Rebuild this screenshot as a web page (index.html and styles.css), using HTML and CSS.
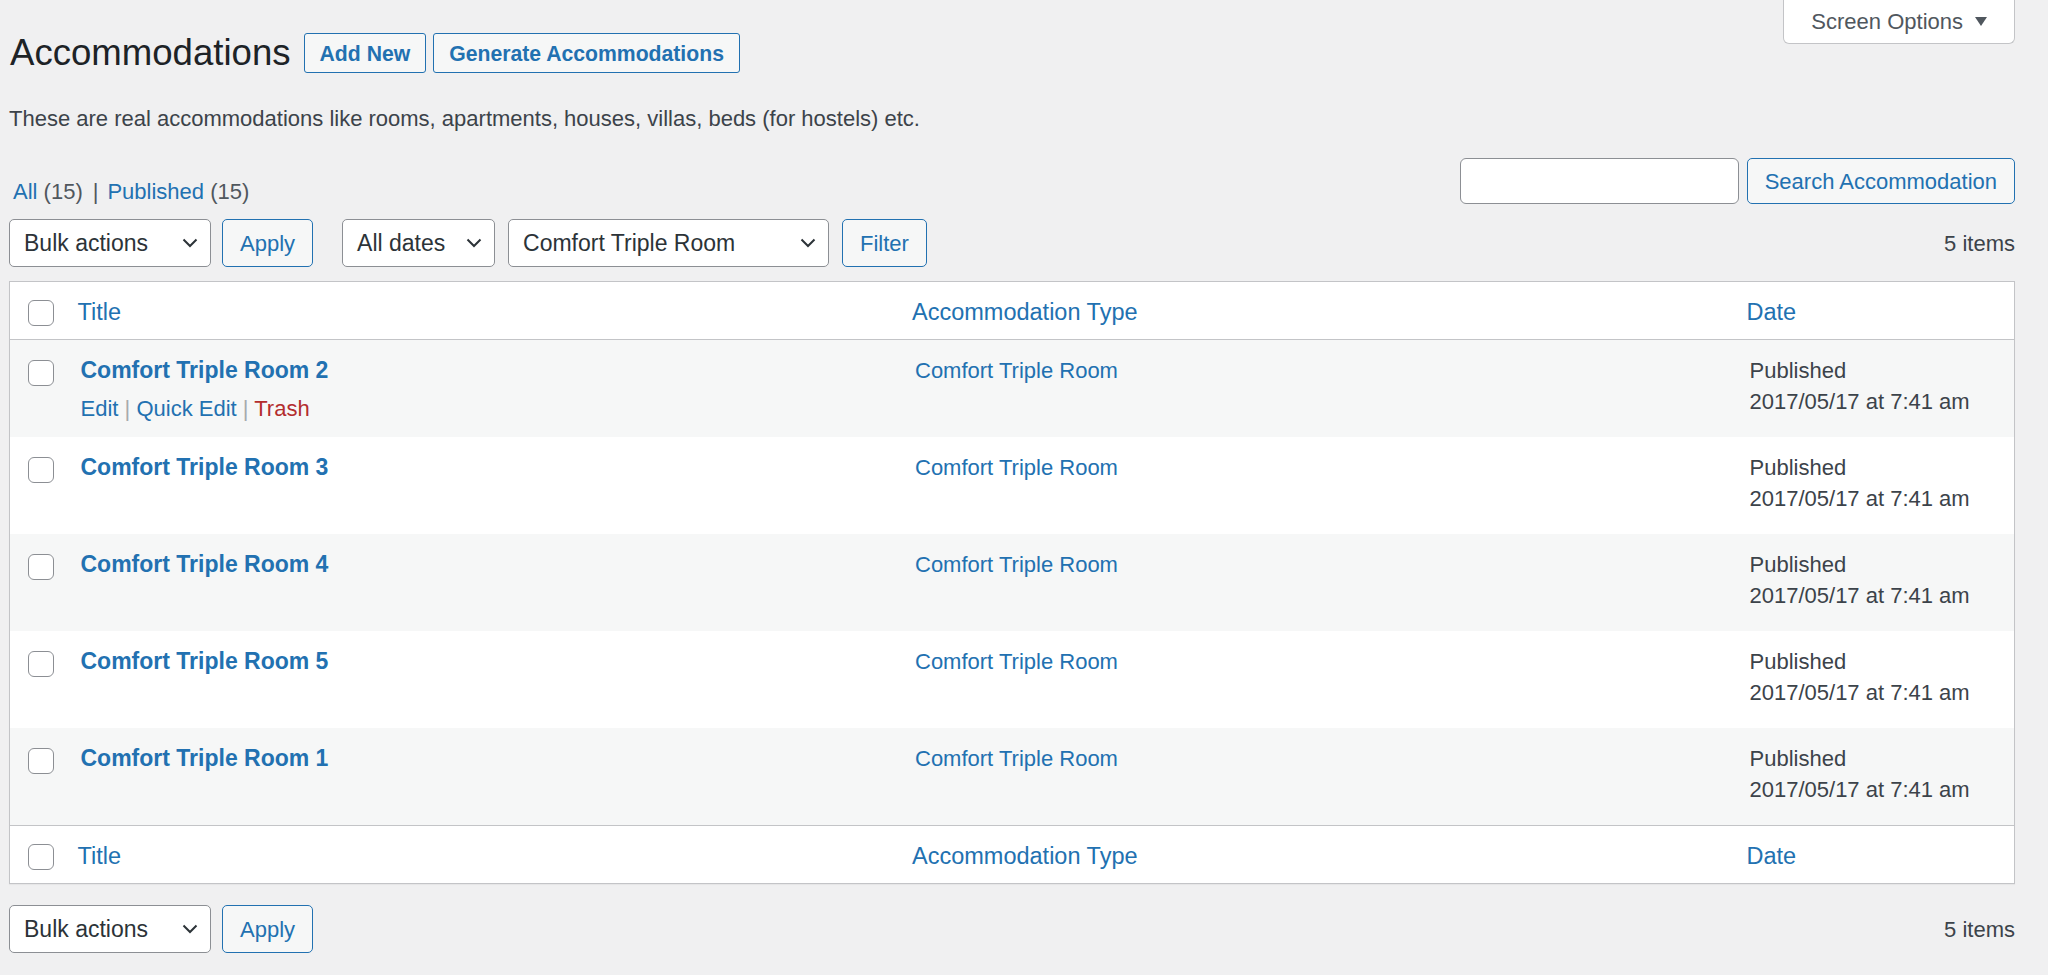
FILE: index.html
```html
<!DOCTYPE html>
<html lang="en">
<head>
    <meta charset="UTF-8">
    <meta name="viewport" content="width=device-width, initial-scale=1.0">
    <title>Accommodations</title>
    <link rel="stylesheet" href="styles.css">
</head>
<body>
    <div class="wrap">
        <div class="page-head">
            <div class="head-main">
                <div class="title-row">
                    <h1>Accommodations</h1>
                    <a href="#" class="title-action">Add New</a>
                    <a href="#" class="title-action">Generate Accommodations</a>
                </div>
                <p class="description">These are real accommodations like rooms, apartments, houses, villas, beds (for hostels) etc.</p>
            </div>
            <button class="screen-options" type="button">
                Screen Options
                <svg width="12" height="9" viewBox="0 0 12 9"><path d="M0 0h12L6 9z" fill="#50575e"/></svg>
            </button>
        </div>

        <div class="list-top">
            <ul class="subsubsub">
                <li><a href="#">All</a> <span class="count">(15)</span></li>
                <li class="sep">|</li>
                <li><a href="#">Published</a> <span class="count">(15)</span></li>
            </ul>
            <form class="search-box" action="#">
                <input type="search" class="search-input">
                <button type="submit" class="button">Search Accommodation</button>
            </form>
        </div>

        <div class="tablenav top">
            <div class="actions">
                <div class="select bulk">
                    <span>Bulk actions</span>
                    <svg width="16" height="10" viewBox="0 0 16 10"><path d="M1.5 1.5l6.5 6.5 6.5-6.5" fill="none" stroke="#2c3338" stroke-width="2"/></svg>
                </div>
                <button class="button" type="button">Apply</button>
            </div>
            <div class="actions filters">
                <div class="select dates">
                    <span>All dates</span>
                    <svg width="16" height="10" viewBox="0 0 16 10"><path d="M1.5 1.5l6.5 6.5 6.5-6.5" fill="none" stroke="#2c3338" stroke-width="2"/></svg>
                </div>
                <div class="select type">
                    <span>Comfort Triple Room</span>
                    <svg width="16" height="10" viewBox="0 0 16 10"><path d="M1.5 1.5l6.5 6.5 6.5-6.5" fill="none" stroke="#2c3338" stroke-width="2"/></svg>
                </div>
                <button class="button" type="button">Filter</button>
            </div>
            <div class="displaying-num">5 items</div>
        </div>

        <table class="list-table">
            <colgroup>
                <col class="col-check">
                <col class="col-title">
                <col class="col-type">
                <col class="col-date">
            </colgroup>
            <thead>
                <tr>
                    <th class="check-column"><input type="checkbox"></th>
                    <th><a href="#">Title</a></th>
                    <th><a href="#">Accommodation Type</a></th>
                    <th><a href="#">Date</a></th>
                </tr>
            </thead>
            <tbody>
                <tr>
                    <td class="check-column"><input type="checkbox"></td>
                    <td class="title-cell">
                        <strong><a href="#">Comfort Triple Room 2</a></strong>
                        <div class="row-actions visible">
                            <a href="#">Edit</a> <span class="pipe">|</span> <a href="#">Quick Edit</a> <span class="pipe">|</span> <a href="#" class="trash">Trash</a>
                        </div>
                    </td>
                    <td><a href="#">Comfort Triple Room</a></td>
                    <td>Published<br>2017/05/17 at 7:41 am</td>
                </tr>
                <tr>
                    <td class="check-column"><input type="checkbox"></td>
                    <td class="title-cell">
                        <strong><a href="#">Comfort Triple Room 3</a></strong>
                        <div class="row-actions">
                            <a href="#">Edit</a> <span class="pipe">|</span> <a href="#">Quick Edit</a> <span class="pipe">|</span> <a href="#" class="trash">Trash</a>
                        </div>
                    </td>
                    <td><a href="#">Comfort Triple Room</a></td>
                    <td>Published<br>2017/05/17 at 7:41 am</td>
                </tr>
                <tr>
                    <td class="check-column"><input type="checkbox"></td>
                    <td class="title-cell">
                        <strong><a href="#">Comfort Triple Room 4</a></strong>
                        <div class="row-actions">
                            <a href="#">Edit</a> <span class="pipe">|</span> <a href="#">Quick Edit</a> <span class="pipe">|</span> <a href="#" class="trash">Trash</a>
                        </div>
                    </td>
                    <td><a href="#">Comfort Triple Room</a></td>
                    <td>Published<br>2017/05/17 at 7:41 am</td>
                </tr>
                <tr>
                    <td class="check-column"><input type="checkbox"></td>
                    <td class="title-cell">
                        <strong><a href="#">Comfort Triple Room 5</a></strong>
                        <div class="row-actions">
                            <a href="#">Edit</a> <span class="pipe">|</span> <a href="#">Quick Edit</a> <span class="pipe">|</span> <a href="#" class="trash">Trash</a>
                        </div>
                    </td>
                    <td><a href="#">Comfort Triple Room</a></td>
                    <td>Published<br>2017/05/17 at 7:41 am</td>
                </tr>
                <tr>
                    <td class="check-column"><input type="checkbox"></td>
                    <td class="title-cell">
                        <strong><a href="#">Comfort Triple Room 1</a></strong>
                        <div class="row-actions">
                            <a href="#">Edit</a> <span class="pipe">|</span> <a href="#">Quick Edit</a> <span class="pipe">|</span> <a href="#" class="trash">Trash</a>
                        </div>
                    </td>
                    <td><a href="#">Comfort Triple Room</a></td>
                    <td>Published<br>2017/05/17 at 7:41 am</td>
                </tr>
            </tbody>
            <tfoot>
                <tr>
                    <th class="check-column"><input type="checkbox"></th>
                    <th><a href="#">Title</a></th>
                    <th><a href="#">Accommodation Type</a></th>
                    <th><a href="#">Date</a></th>
                </tr>
            </tfoot>
        </table>

        <div class="tablenav bottom">
            <div class="actions">
                <div class="select bulk">
                    <span>Bulk actions</span>
                    <svg width="16" height="10" viewBox="0 0 16 10"><path d="M1.5 1.5l6.5 6.5 6.5-6.5" fill="none" stroke="#2c3338" stroke-width="2"/></svg>
                </div>
                <button class="button" type="button">Apply</button>
            </div>
            <div class="displaying-num">5 items</div>
        </div>
    </div>
</body>
</html>
```

FILE: styles.css
```css
body {
    margin: 0;
    background: #f0f0f1;
    color: #3c434a;
    font-family: "Liberation Sans", Arial, sans-serif;
    font-size: 22px;
    line-height: 31px;
}
a {
    color: #2271b1;
    text-decoration: none;
}
.wrap {
    padding: 0 33px 0 9px;
}

/* header: title, actions, screen options tab */
.page-head {
    display: flex;
    align-items: flex-start;
}
.head-main {
    flex: 1;
    padding-top: 33px;
}
.title-row {
    display: flex;
    align-items: center;
    height: 40px;
}
.title-row h1 {
    margin: 0 13px 0 1px;
    font-size: 36.6px;
    font-weight: 400;
    line-height: 40px;
    color: #1d2327;
}
.title-action {
    display: flex;
    align-items: center;
    height: 40px;
    box-sizing: border-box;
    padding: 0 15px;
    margin-right: 7px;
    border: 1px solid #2271b1;
    border-radius: 3px;
    background: #f6f7f7;
    font-size: 21.2px;
    font-weight: 700;
}
.description {
    margin: 30px 0 0;
}
.screen-options {
    display: flex;
    align-items: center;
    gap: 12px;
    height: 44px;
    padding: 0 27px;
    border: 1px solid #c3c4c7;
    border-top: 0;
    border-radius: 0 0 6px 6px;
    background: #fff;
    color: #50575e;
    font-family: inherit;
    font-size: 22px;
    line-height: 31px;
}

/* views + search */
.list-top {
    display: flex;
    justify-content: space-between;
    align-items: flex-start;
    margin-top: 24px;
}
.subsubsub {
    display: flex;
    margin: 18px 0 0;
    padding: 0 0 0 4px;
    list-style: none;
    color: #50575e;
}
.subsubsub .sep {
    margin: 0 9px 0 10px;
    color: #50575e;
}
.search-box {
    display: flex;
    gap: 8px;
    margin: 0;
}
.search-input {
    width: 279px;
    height: 46px;
    box-sizing: border-box;
    border: 1px solid #8c8f94;
    border-radius: 6px;
    background: #fff;
    margin: 0;
}
.button {
    display: flex;
    align-items: center;
    height: 48px;
    box-sizing: border-box;
    padding: 0 17px;
    border: 1px solid #2271b1;
    border-radius: 5px;
    background: #f6f7f7;
    color: #2271b1;
    font-family: inherit;
    font-size: 22px;
    line-height: 31px;
    margin: 0;
}
.search-box .button {
    height: 46px;
}

/* table navigation */
.tablenav {
    display: flex;
    align-items: center;
    height: 48px;
}
.tablenav.top {
    margin: 12px 0 14px;
}
.tablenav.bottom {
    margin-top: 21px;
}
.actions {
    display: flex;
    gap: 11px;
}
.filters {
    margin-left: 29px;
    gap: 13px;
}
.displaying-num {
    margin-left: auto;
    color: #3c434a;
}
.select {
    display: flex;
    align-items: center;
    justify-content: space-between;
    height: 48px;
    box-sizing: border-box;
    padding: 0 12px 0 14px;
    border: 1px solid #8c8f94;
    border-radius: 5px;
    background: #fff;
    color: #2c3338;
    font-size: 23px;
}
.select.bulk {
    width: 202px;
}
.select.dates {
    width: 153px;
}
.select.type {
    width: 321px;
}

/* list table */
.list-table {
    width: 100%;
    table-layout: fixed;
    border-collapse: collapse;
    border: 1px solid #c3c4c7;
    background: #fff;
    box-shadow: 0 1px 1px rgba(0, 0, 0, 0.04);
}
.col-check {
    width: 55px;
}
.col-date {
    width: 281px;
}
.list-table th {
    padding: 15px 13px 12px;
    font-size: 23.5px;
    font-weight: 400;
    text-align: left;
    line-height: 30px;
    vertical-align: top;
}
.list-table thead th {
    border-bottom: 1px solid #c3c4c7;
}
.list-table tfoot th {
    border-top: 1px solid #c3c4c7;
}
.list-table td {
    padding: 15px 16px 13px;
    vertical-align: top;
}
.list-table tbody tr:nth-child(odd) {
    background: #f6f7f7;
}
.list-table th.check-column {
    padding: 18px 0 0 18px;
}
.list-table td.check-column {
    padding: 20px 0 0 18px;
}
.check-column input {
    display: block;
    appearance: none;
    width: 26px;
    height: 26px;
    margin: 0;
    box-sizing: border-box;
    border: 1.5px solid #8c8f94;
    border-radius: 6px;
    background: #fff;
}
.title-cell strong {
    display: block;
    margin-bottom: 4px;
    font-size: 23px;
}
.row-actions {
    padding-top: 3px;
    visibility: hidden;
}
.row-actions.visible {
    visibility: visible;
}
.row-actions .pipe {
    color: #a7aaad;
}
.row-actions .trash {
    color: #b32d2e;
}
```
